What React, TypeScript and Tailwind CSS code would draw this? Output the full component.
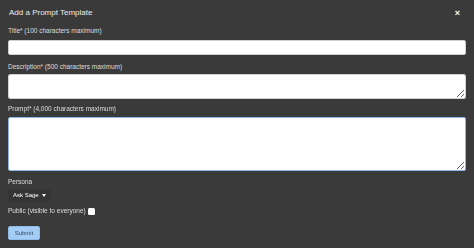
import { useState } from "react";

export default function App() {
  const [isPublic, setIsPublic] = useState(false);

  return (
    <div className="w-[474px] h-[248px] bg-[#3a3a3a] text-[#e6e6e6] overflow-hidden" style={{ fontFamily: '"Liberation Sans", Arial, sans-serif' }}>
      <div className="flex items-center justify-between pl-[9px] pr-[14px] pt-[4px] h-[22px]">
        <h1 className="text-[8px] leading-none font-normal text-[#ececec]">Add a Prompt Template</h1>
        <button className="text-[9px] leading-none font-bold text-white">×</button>
      </div>

      <div className="flex flex-col px-[8px]">
        {/* Title */}
        <label className="mt-[6px] text-[6.5px] leading-none text-[#dedede]">Title* (100 characters maximum)</label>
        <input className="mt-[5px] h-[15px] w-full rounded-[2px] bg-white border border-[#d0d0d0]" />

        {/* Description */}
        <label className="mt-[9px] text-[6.5px] leading-none text-[#dedede]">Description* (500 characters maximum)</label>
        <textarea className="mt-[3.5px] h-[25px] w-full rounded-[2px] bg-white border border-[#d0d0d0] resize-y" />

        {/* Prompt */}
        <label className="mt-[7px] text-[6.5px] leading-none text-[#dedede]">Prompt* (4,000 characters maximum)</label>
        <textarea className="mt-[4.5px] h-[54px] w-full rounded-[2px] bg-white border border-[#8fb6e6] resize-y" />

        {/* Persona */}
        <label className="mt-[8px] text-[6.5px] leading-none text-[#dedede]">Persona</label>
        <div className="mt-[4px] flex">
          <button className="h-[13px] px-[5px] flex items-center gap-[3px] rounded-[2px] bg-[#353535] text-[6px] text-white">
            Ask Sage
            <span className="w-0 h-0 border-l-[2.5px] border-r-[2.5px] border-t-[3px] border-l-transparent border-r-transparent border-t-white" />
          </button>
        </div>

        {/* Public */}
        <div className="mt-[6px] flex items-center gap-[2px]">
          <span className="text-[6.5px] leading-none text-[#dedede]">Public (visible to everyone)</span>
          <input
            type="checkbox"
            checked={isPublic}
            onChange={(e) => setIsPublic(e.target.checked)}
            className="appearance-none w-[7px] h-[7px] rounded-[1.5px] bg-white"
          />
        </div>

        <div className="mt-[11px] flex">
          <button className="h-[14px] w-[32px] rounded-[2px] bg-[#a4cdf6] text-[6px] text-[#2d4a66] border border-[#8fbbe8]">Submit</button>
        </div>
      </div>
    </div>
  );
}
